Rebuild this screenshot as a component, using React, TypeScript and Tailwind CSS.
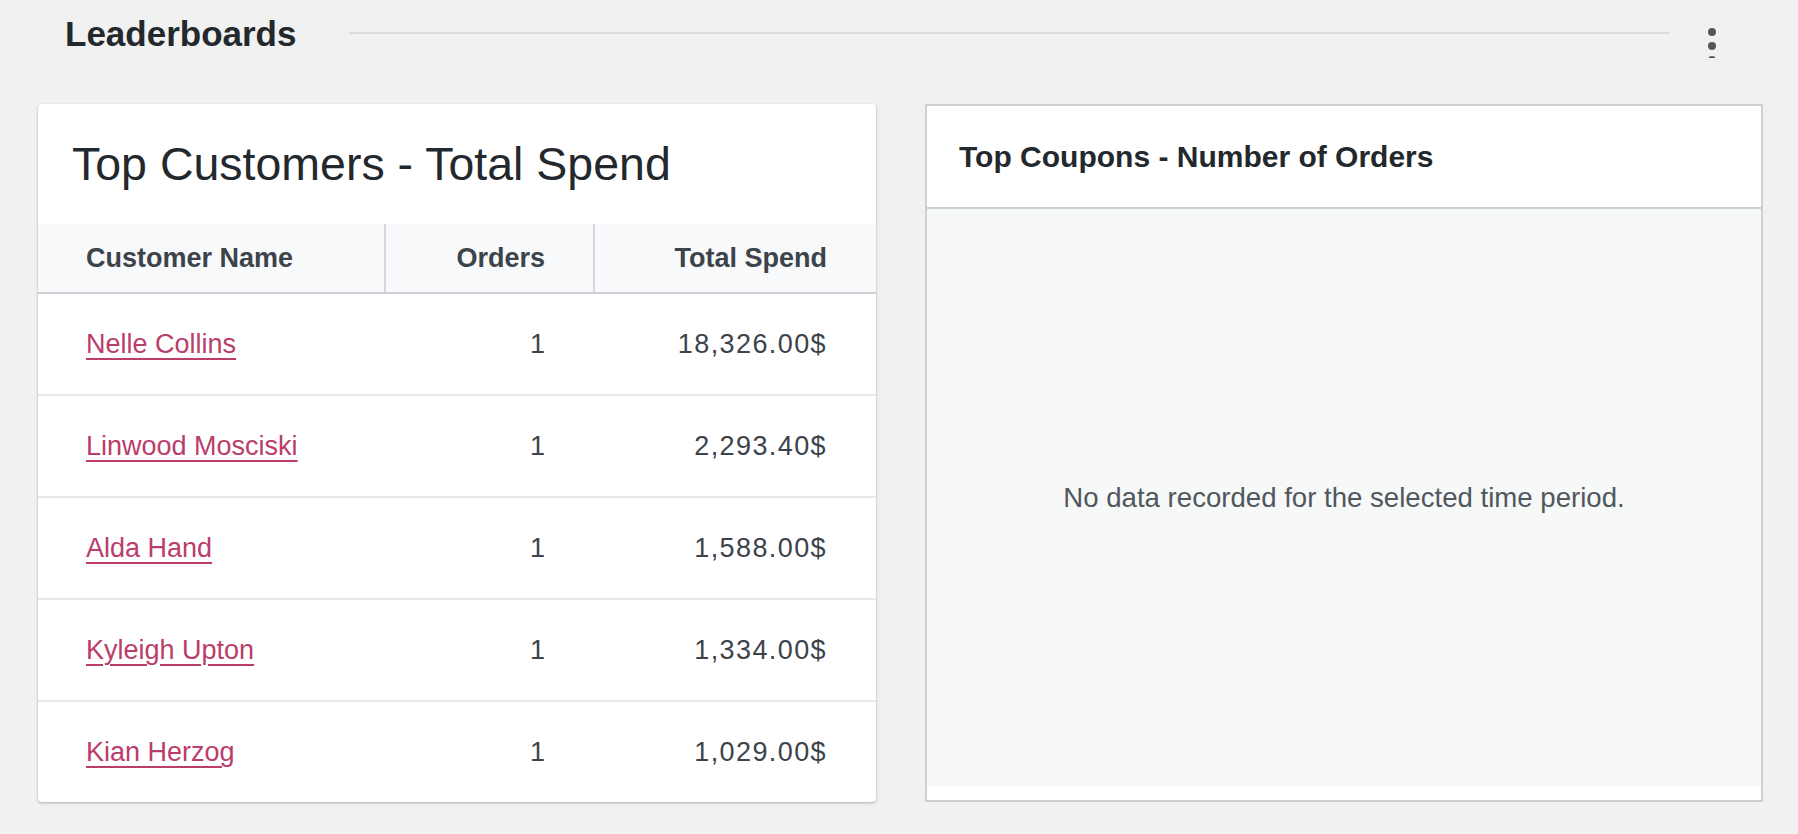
import React from "react";

const rows = [
  { name: "Nelle Collins", orders: "1", total: "18,326.00$" },
  { name: "Linwood Mosciski", orders: "1", total: "2,293.40$" },
  { name: "Alda Hand", orders: "1", total: "1,588.00$" },
  { name: "Kyleigh Upton", orders: "1", total: "1,334.00$" },
  { name: "Kian Herzog", orders: "1", total: "1,029.00$" },
];

export default function App() {
  return (
    <div
      className="min-h-[834px] w-full bg-[#f1f1f1]"
      style={{ fontFamily: '"Liberation Sans", Arial, sans-serif' }}
    >
      {/* Section header */}
      <div className="flex h-[66px] items-center pl-[65px] pr-[82px]">
        <h2 className="text-[35px] font-bold leading-none text-[#23282d]">Leaderboards</h2>
        <div className="ml-[53px] h-[2px] flex-1 bg-[#dcdcde]" />
        <div className="ml-[39px] mt-[28px] flex h-[30px] flex-col gap-[6px] self-start overflow-hidden">
          <span className="block h-[8px] w-[8px] shrink-0 rounded-full bg-[#50575e]" />
          <span className="block h-[8px] w-[8px] shrink-0 rounded-full bg-[#50575e]" />
          <span className="block h-[8px] w-[8px] shrink-0 rounded-full bg-[#50575e]" />
        </div>
      </div>

      {/* Cards */}
      <div className="mt-[38px] grid grid-cols-[838px_838px] gap-[49px] pl-[38px]">
        {/* Top Customers */}
        <div className="overflow-hidden rounded-[4px] bg-white shadow-[0_1px_3px_rgba(0,0,0,0.28)]">
          <div className="flex h-[120px] items-center px-[34px]">
            <h3 className="text-[46.5px] font-normal leading-none text-[#23282d]">
              Top Customers - Total Spend
            </h3>
          </div>
          <div className="grid h-[70px] grid-cols-[348px_209px_1fr] border-b-2 border-[#ccd0d4] bg-[#f8f9fa] text-[27px] font-bold text-[#3c434a]">
            <div className="flex items-center border-r-2 border-[#d4d6da] pl-[48px]">Customer Name</div>
            <div className="flex items-center justify-end border-r-2 border-[#d4d6da] pr-[48px]">Orders</div>
            <div className="flex items-center justify-end pr-[49px]">Total Spend</div>
          </div>
          {rows.map((r, i) => (
            <div
              key={r.name}
              className={
                "grid grid-cols-[348px_209px_1fr] text-[27px] text-[#3c434a] " +
                (i < rows.length - 1 ? "h-[102px] border-b-2 border-[#e6e7e9]" : "h-[100px]")
              }
            >
              <div className="flex items-center pl-[48px]">
                <a
                  href="#"
                  className="text-[#bb3d6b] underline decoration-[2px] underline-offset-[5px]"
                >
                  {r.name}
                </a>
              </div>
              <div className="flex items-center justify-end pr-[50px]">{r.orders}</div>
              <div className="flex items-center justify-end pr-[49px] tracking-[1.4px]">{r.total}</div>
            </div>
          ))}
        </div>

        {/* Top Coupons */}
        <div className="flex flex-col border-2 border-[#ccd0d4] bg-white">
          <div className="flex h-[103px] items-center border-b-2 border-[#ccd0d4] pl-[32px]">
            <h3 className="text-[30px] font-bold leading-none text-[#23282d]">
              Top Coupons - Number of Orders
            </h3>
          </div>
          <div className="mb-[13px] flex flex-1 items-center justify-center bg-[#f7f8f8]">
            <p className="text-[27.6px] text-[#50575e]">No data recorded for the selected time period.</p>
          </div>
        </div>
      </div>
    </div>
  );
}
